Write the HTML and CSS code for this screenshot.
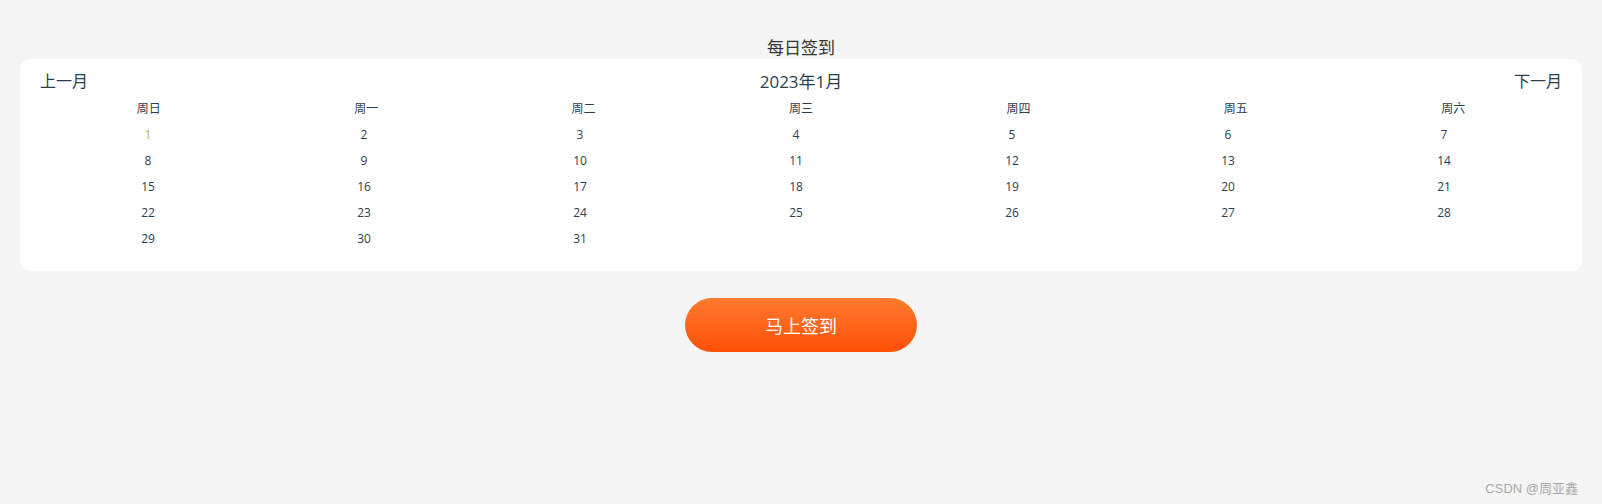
FILE: index.html
```html
<!DOCTYPE html>
<html lang="zh-CN">
<head>
  <meta charset="UTF-8">
  <title>每日签到</title>
  <link rel="stylesheet" href="styles.css">
</head>
<body>
  <div class="page">
    <div class="title">每日签到</div>

    <div class="calendar">
      <div class="cal-nav">
        <span class="nav-btn">上一月</span>
        <span class="cal-month">2023年1月</span>
        <span class="nav-btn">下一月</span>
      </div>

      <div class="week">
        <span>周日</span><span>周一</span><span>周二</span><span>周三</span><span>周四</span><span>周五</span><span>周六</span>
      </div>

      <div class="days">
        <span class="today">1</span><span>2</span><span>3</span><span>4</span><span>5</span><span>6</span><span>7</span>
        <span>8</span><span>9</span><span>10</span><span>11</span><span>12</span><span>13</span><span>14</span>
        <span>15</span><span>16</span><span>17</span><span>18</span><span>19</span><span>20</span><span>21</span>
        <span>22</span><span>23</span><span>24</span><span>25</span><span>26</span><span>27</span><span>28</span>
        <span>29</span><span>30</span><span>31</span>
      </div>
    </div>

    <button class="sign-btn">马上签到</button>
  </div>

  <div class="watermark">CSDN @周亚鑫</div>
</body>
</html>
```

FILE: styles.css
```css
body {
  margin: 0;
  background: #f5f5f5;
  font-family: "Open Sans", "Noto Sans CJK SC", sans-serif;
  color: #2c3e50;
}
.page { padding: 37px 20px 0; }
.title { text-align: center; font-size: 17px; line-height: 22px; color: #333; }

.calendar {
  background: #fff;
  border-radius: 10px;
  padding: 10px 20px 19px;
}
.cal-nav {
  display: flex;
  justify-content: space-between;
  align-items: center;
  height: 22px;
  margin-bottom: 5px;
  font-size: 16px;
}
.nav-btn { cursor: pointer; }
.cal-month { font-size: 17px; }

.week, .days {
  display: grid;
  grid-template-columns: repeat(7, 1fr);
  text-align: center;
}
.week span { height: 26px; line-height: 26px; font-size: 12px; }
.days { padding-right: 10px; }
.days span { height: 26px; line-height: 26px; font-size: 12px; }
.days .today { color: #a4b93a; }

.sign-btn {
  display: block;
  margin: 27px auto 0;
  width: 232px;
  height: 54px;
  border: none;
  border-radius: 27px;
  background: linear-gradient(180deg, #ff7a2e 0%, #ff5007 100%);
  color: #fff;
  font-family: inherit;
  font-size: 18px;
  cursor: pointer;
}

.watermark {
  position: absolute;
  right: 24px;
  bottom: 7px;
  font-size: 13px;
  color: #aaa;
  font-family: "Liberation Sans", "Noto Sans CJK SC", sans-serif;
}
```
